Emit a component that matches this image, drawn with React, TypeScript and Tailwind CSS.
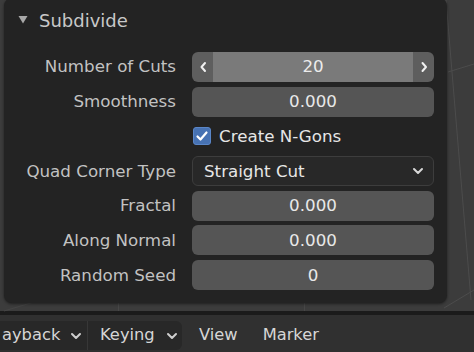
import React from 'react';

const Chevron: React.FC<{ dir: 'left' | 'right' | 'down'; className?: string }> = ({ dir, className }) => {
  const d =
    dir === 'left' ? 'M6 2 L2.5 6 L6 10' : dir === 'right' ? 'M2.5 2 L6 6 L2.5 10' : 'M2 4 L6 8 L10 4';
  const w = dir === 'down' ? 12 : 8;
  return (
    <svg width={w} height="12" viewBox={`0 0 ${w} 12`} className={className}>
      <path d={d} fill="none" stroke="currentColor" strokeWidth="2" strokeLinecap="round" strokeLinejoin="round" />
    </svg>
  );
};

const Row: React.FC<{ label?: string; children: React.ReactNode }> = ({ label, children }) => (
  <div className="flex items-center h-[30px]">
    <div className="w-[172px] text-right text-[#c2c2c2] whitespace-nowrap">{label}</div>
    <div className="ml-[16px] w-[242px] h-full">{children}</div>
  </div>
);

const NumField: React.FC<{ value: string }> = ({ value }) => (
  <div className="h-full rounded-[6px] bg-[#555555] flex items-center justify-center text-[#e8e8e8]">
    {value}
  </div>
);

const App: React.FC = () => {
  return (
    <div className="w-[474px] h-[352px] relative overflow-hidden bg-[#3c3c3c] flex flex-col font-['DejaVu_Sans',sans-serif] text-[16.7px]">
      <svg className="absolute inset-0" width="474" height="352">
        <line x1="446" y1="0" x2="471" y2="300" stroke="#4c4c4c" strokeWidth="1" />
        <line x1="448" y1="72" x2="474" y2="64" stroke="#4c4c4c" strokeWidth="1" />
        <line x1="444" y1="308" x2="474" y2="290" stroke="#4c4c4c" strokeWidth="1" />
        <line x1="4" y1="311" x2="34" y2="302" stroke="#454545" strokeWidth="1" />
        <line x1="118.5" y1="303" x2="118.5" y2="311" stroke="#474747" strokeWidth="1" />
        <line x1="304.5" y1="303" x2="304.5" y2="311" stroke="#474747" strokeWidth="1" />
      </svg>

      <div className="relative ml-[4px] mt-[-2px] w-[443px] h-[305px] shrink-0 bg-[#232323] rounded-[8px] shadow-[0_1px_3px_rgba(0,0,0,0.5)]">
        <div className="h-[44px] flex items-center pl-[14px] text-[18px] text-[#c8c8c8]">
          <svg width="10" height="9" viewBox="0 0 10 9" className="mr-[11px] mt-[-1px]">
            <path d="M0.5 1 L9.5 1 L5 8.5 Z" fill="#a8a8a8" />
          </svg>
          Subdivide
        </div>

        <div className="pt-[10px] flex flex-col gap-[4.7px]">
          <Row label="Number of Cuts">
            <div className="h-full rounded-[6px] overflow-hidden flex text-[#ececec]">
              <div className="w-[21px] bg-[#5e5e5e] flex items-center justify-center text-[#f0f0f0]">
                <Chevron dir="left" />
              </div>
              <div className="flex-1 bg-[#7a7a7a] flex items-center justify-center">20</div>
              <div className="w-[21px] bg-[#5e5e5e] flex items-center justify-center text-[#f0f0f0]">
                <Chevron dir="right" />
              </div>
            </div>
          </Row>
          <Row label="Smoothness">
            <NumField value="0.000" />
          </Row>
          <Row>
            <div className="h-full flex items-center">
              <div className="ml-[1px] w-[18px] h-[18px] rounded-[3px] bg-[#4772b3] border border-[#5a86c8] flex items-center justify-center">
                <svg width="14" height="14" viewBox="0 0 14 14">
                  <path d="M2.5 7.5 L5.5 10.5 L11.5 3.5" fill="none" stroke="#ffffff" strokeWidth="2.2" strokeLinecap="round" strokeLinejoin="round" />
                </svg>
              </div>
              <span className="ml-[8px] text-[#e6e6e6]">Create N-Gons</span>
            </div>
          </Row>
          <Row label="Quad Corner Type">
            <div className="h-full rounded-[6px] bg-[#282828] border border-[#3d3d3d] flex items-center justify-between pl-[11px] pr-[9px] text-[#e6e6e6]">
              <span>Straight Cut</span>
              <Chevron dir="down" className="text-[#d8d8d8]" />
            </div>
          </Row>
          <Row label="Fractal">
            <NumField value="0.000" />
          </Row>
          <Row label="Along Normal">
            <NumField value="0.000" />
          </Row>
          <Row label="Random Seed">
            <NumField value="0" />
          </Row>
        </div>
      </div>

      <div className="mt-[8px] h-[4px] shrink-0 bg-[#1b1b1b]" />

      <div className="relative flex-1 bg-[#303030] flex items-center pt-[4px] text-[16.3px] text-[#d6d6d6]">
        <div className="flex h-[29px] rounded-r-[6px] bg-[#282828]">
          <div className="w-[88px] flex items-center pl-[2px] border-r border-[#373737]">
            <span>ayback</span>
            <Chevron dir="down" className="ml-[10px] text-[#cfcfcf]" />
          </div>
          <div className="w-[94px] flex items-center pl-[12px]">
            <span>Keying</span>
            <Chevron dir="down" className="ml-[11px] text-[#cfcfcf]" />
          </div>
        </div>
        <span className="ml-[17px]">View</span>
        <span className="ml-[25px]">Marker</span>
      </div>
    </div>
  );
};

export default App;
